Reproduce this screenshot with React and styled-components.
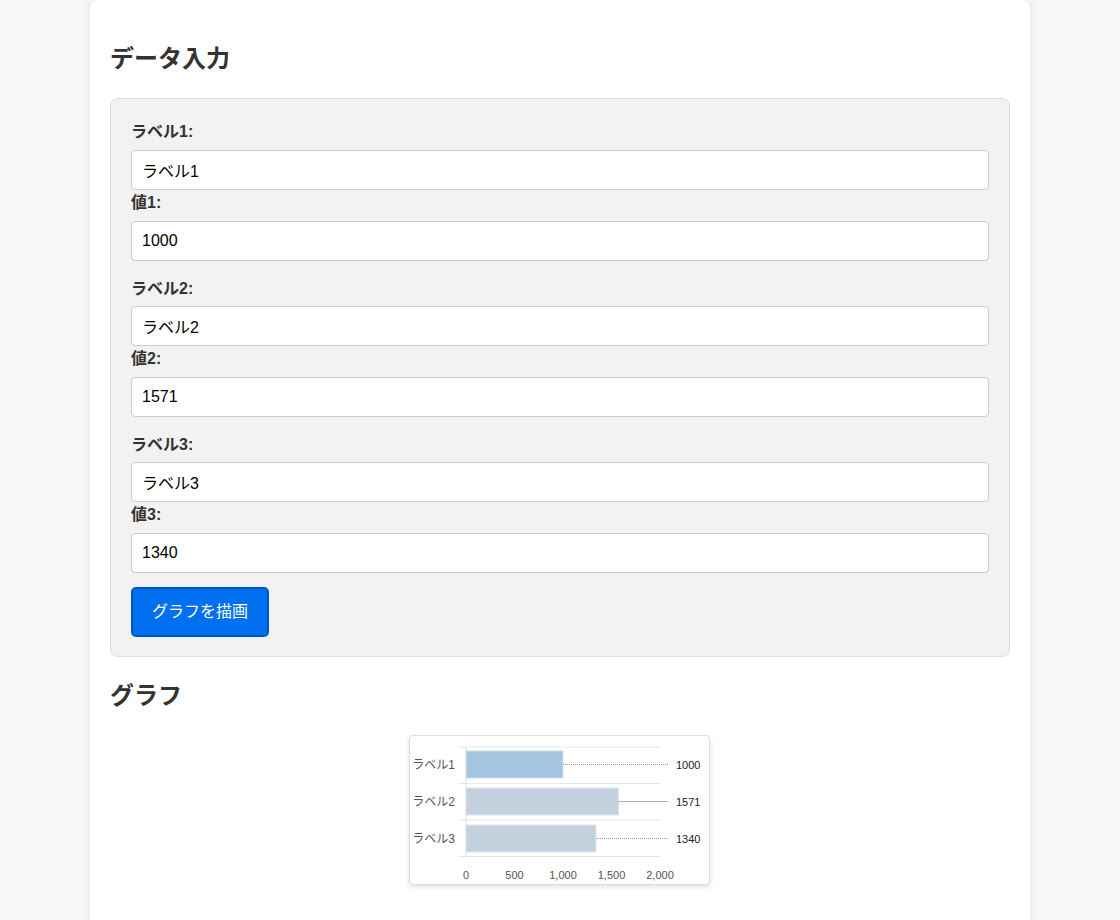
import React, { useState } from 'react'
import styled, { createGlobalStyle } from 'styled-components'

const GlobalStyle = createGlobalStyle`
  body {
    margin: 0;
    background-color: #f7f7f7;
    font-family: "Liberation Sans", Arial, "Noto Sans CJK JP", sans-serif;
    line-height: 1.6;
    color: #333;
  }
`

const Container = styled.div`
  width: 900px;
  margin: 0 auto;
  padding: 20px;
  background-color: #fff;
  border-radius: 8px;
  box-shadow: 0 0 10px rgba(0, 0, 0, 0.1);
  min-height: 900px;
`

const Heading = styled.h2`
  font-size: 24px;
  font-weight: bold;
  color: #333;
  margin: 20px 0;
`

const Form = styled.form`
  background-color: #f2f2f2;
  border: 1px solid #ddd;
  border-radius: 8px;
  padding: 20px 20px 19px;
`

const Group = styled.div`
  margin-bottom: ${p => (p.$last ? '14px' : '15px')};
`

const Label = styled.label`
  display: block;
  font-size: 16px;
  font-weight: bold;
  color: #333;
  margin-bottom: 5px;
`

const Input = styled.input`
  display: block;
  width: 100%;
  height: 40px;
  box-sizing: border-box;
  padding: 10px;
  font-size: 16px;
  font-family: "Liberation Sans", Arial, "Noto Sans CJK JP", sans-serif;
  color: #000;
  background: #fff;
  border: 1px solid #ccc;
  border-radius: 4px;
  outline: none;
`

const Button = styled.button`
  padding: 14px 19px;
  font-size: 16px;
  line-height: 18px;
  font-family: "Liberation Sans", Arial, "Noto Sans CJK JP", sans-serif;
  color: #fff;
  background-color: #0070f0;
  border: 2px solid #0056c4;
  border-radius: 5px;
  cursor: pointer;
`

const ChartWrap = styled.div`
  display: flex;
  justify-content: center;
  margin-left: -2px;
`

const ChartBox = styled.div`
  width: 299px;
  height: 148px;
  border: 1px solid #ddd;
  border-radius: 4px;
  box-shadow: 0 2px 5px rgba(0, 0, 0, 0.12);
  background: #fff;
  svg {
    display: block;
  }
`

const chartFont = '"Liberation Sans", Arial, "Noto Sans CJK JP", sans-serif'

const BarChart = ({ items }) => {
  const x0 = 56
  const scale = 97 / 1000
  const rows = [28.5, 65.5, 102.5]
  const grid = [11, 47.5, 84, 120.5]
  return (
    <svg width="299" height="148" viewBox="0 0 299 148">
      {grid.map(y => (
        <line key={y} x1="48" x2="250" y1={y} y2={y} stroke="#e6e6e6" strokeWidth="1" />
      ))}
      {items.map((it, i) => {
        const cy = rows[i]
        const w = Math.max(0, it.value * scale)
        const first = i === 0
        return (
          <g key={i}>
            <text x="45" y={cy + 4} textAnchor="end" fontSize="12" fill="#555" fontFamily={chartFont}>
              {it.label}
            </text>
            <rect
              x={x0}
              y={cy - 13.5}
              width={w}
              height="27"
              fill={first ? '#a5c4df' : '#c3d1de'}
              stroke={first ? '#cfe0ef' : '#dde6ee'}
              strokeWidth="1"
            />
            <line
              x1={x0 + w}
              x2="258"
              y1={cy}
              y2={cy}
              stroke={i === 1 ? '#666' : '#999'}
              strokeWidth="1"
              strokeDasharray="1 1"
            />
            <text x="266" y={cy + 4} fontSize="11" fill="#222" fontFamily={chartFont}>
              {it.value}
            </text>
          </g>
        )
      })}
      <line x1={x0} x2={x0} y1="11" y2="121" stroke="#ddd" strokeWidth="1" />
      {[0, 500, 1000, 1500, 2000].map(v => (
        <text
          key={v}
          x={x0 + v * scale}
          y="143"
          textAnchor="middle"
          fontSize="11"
          fill="#555"
          fontFamily={chartFont}
        >
          {v.toLocaleString('en-US')}
        </text>
      ))}
    </svg>
  )
}

const App = () => {
  const [rows, setRows] = useState([
    { label: 'ラベル1', value: '1000' },
    { label: 'ラベル2', value: '1571' },
    { label: 'ラベル3', value: '1340' },
  ])
  const [chart, setChart] = useState(rows.map(r => ({ label: r.label, value: Number(r.value) })))

  const update = (i, key, val) => {
    setRows(rows.map((r, j) => (j === i ? { ...r, [key]: val } : r)))
  }

  const draw = e => {
    e.preventDefault()
    setChart(rows.map(r => ({ label: r.label, value: Number(r.value) || 0 })))
  }

  return (
    <>
      <GlobalStyle />
      <Container>
        <Heading>データ入力</Heading>
        <Form onSubmit={draw}>
          {rows.map((r, i) => (
            <Group key={i} $last={i === rows.length - 1}>
              <Label>ラベル{i + 1}:</Label>
              <Input value={r.label} onChange={e => update(i, 'label', e.target.value)} />
              <Label>値{i + 1}:</Label>
              <Input value={r.value} onChange={e => update(i, 'value', e.target.value)} />
            </Group>
          ))}
          <Button type="submit">グラフを描画</Button>
        </Form>
        <Heading>グラフ</Heading>
        <ChartWrap>
          <ChartBox>
            <BarChart items={chart} />
          </ChartBox>
        </ChartWrap>
      </Container>
    </>
  )
}

export default App
